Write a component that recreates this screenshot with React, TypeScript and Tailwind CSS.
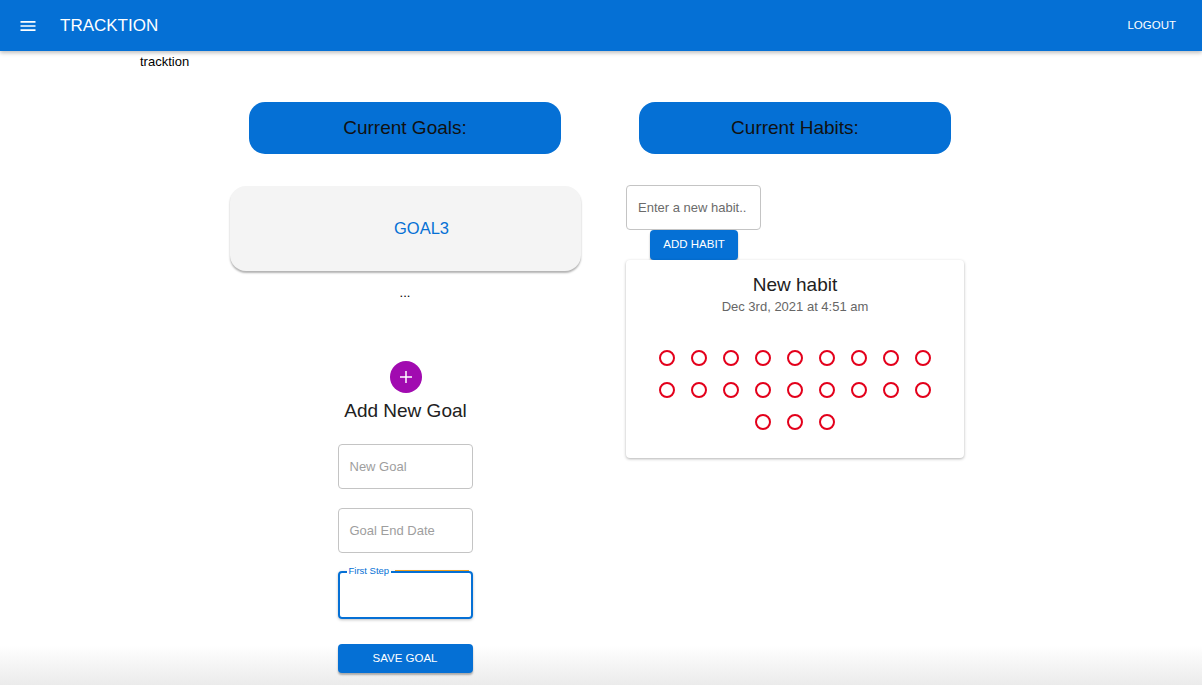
import React from "react";

const BLUE = "bg-[#0570d5]";

function MenuIcon() {
  return (
    <svg width="20" height="20" viewBox="0 0 24 24" fill="white">
      <path d="M3 18h18v-2H3v2zm0-5h18v-2H3v2zm0-7v2h18V6H3z" />
    </svg>
  );
}

function OutlinedInput({ placeholder }: { placeholder: string }) {
  return (
    <div className="w-[135px] h-[45px] border border-[#c4c4c4] rounded-[4px] flex items-center px-[11px] text-[13px] text-[#9e9e9e]">
      {placeholder}
    </div>
  );
}

function FocusedField({ label }: { label: string }) {
  return (
    <div className="relative w-[135px] h-[48px] border-2 border-[#0570d5] rounded-[4px] shadow-[0_1px_3px_rgba(0,0,0,0.25)]">
      <div className="absolute -top-[3px] left-[55px] right-[2px] h-[1px] bg-[#f0a020]" />
      <span className="absolute -top-[8px] left-[7px] bg-white px-[2px] text-[9.5px] leading-[12px] text-[#0570d5]">
        {label}
      </span>
    </div>
  );
}

export default function App() {
  const circles = Array.from({ length: 21 });

  return (
    <div className="relative min-h-[685px] bg-white font-['Liberation_Sans',Arial,sans-serif] text-[#212121] overflow-hidden">
      <div className="pointer-events-none absolute bottom-0 left-0 right-0 h-[40px] bg-gradient-to-t from-[#ebebeb] to-white" />

      <header className={`relative z-20 h-[51px] ${BLUE} flex items-center shadow-[0_2px_4px_rgba(0,0,0,0.25)]`}>
        <div className="ml-[18px] w-[20px] h-[20px] flex items-center">
          <MenuIcon />
        </div>
        <div className="ml-[22px] text-[17px] text-white">TRACKTION</div>
        <div className="ml-auto mr-[26px] text-[11.5px] text-white">LOGOUT</div>
      </header>

      <div className="relative z-10">
        <div className="pl-[140px] pt-[3px] text-[13px] leading-[16px] text-black">tracktion</div>

        <div className="flex ml-[210px] mt-[32px]">
          {/* goals column */}
          <div className="w-[390px] flex flex-col items-center">
            <div className={`w-[312px] h-[52px] ${BLUE} rounded-[16px] flex items-center justify-center text-[19px] text-[#111]`}>
              Current Goals:
            </div>

            <div className="mt-[32px] w-[351px] h-[85px] bg-[#f4f4f4] rounded-[16px] shadow-[0_2px_2px_rgba(0,0,0,0.3)] flex items-center justify-center">
              <span className="pl-[33px] text-[16.5px] text-[#0570d5]">GOAL3</span>
            </div>

            <div className="mt-[14px] text-[13px] leading-[16px] text-black">...</div>

            <button className="mt-[60px] ml-[1px] w-[32px] h-[32px] rounded-full bg-[#a10bb0] flex items-center justify-center">
              <svg width="14" height="14" viewBox="0 0 14 14" stroke="white" strokeWidth="1.5">
                <path d="M7 1v12M1 7h12" />
              </svg>
            </button>

            <div className="mt-[6px] ml-[1px] text-[19px] leading-[24px]">Add New Goal</div>

            <div className="mt-[21px]">
              <OutlinedInput placeholder="New Goal" />
            </div>
            <div className="mt-[19px]">
              <OutlinedInput placeholder="Goal End Date" />
            </div>
            <div className="mt-[18px]">
              <FocusedField label="First Step" />
            </div>

            <button className={`mt-[25px] w-[135px] h-[29px] ${BLUE} rounded-[4px] text-white text-[11.5px] shadow-[0_2px_2px_rgba(0,0,0,0.3)]`}>
              SAVE GOAL
            </button>
          </div>

          {/* habits column */}
          <div className="w-[390px] flex flex-col">
            <div className={`ml-[39px] w-[312px] h-[52px] ${BLUE} rounded-[16px] flex items-center justify-center text-[19px] text-[#111]`}>
              Current Habits:
            </div>

            <div className="mt-[31px] ml-[26px] w-[135px] h-[45px] border border-[#c4c4c4] rounded-[4px] flex items-center px-[11px] text-[13px] text-[#6b6b6b] whitespace-nowrap">
              Enter a new habit..
            </div>

            <button className={`ml-[50px] w-[88px] h-[30px] ${BLUE} rounded-[4px] text-white text-[11.5px] shadow-[0_2px_2px_rgba(0,0,0,0.3)]`}>
              ADD HABIT
            </button>

            <div className="ml-[26px] w-[338px] h-[198px] bg-white rounded-[4px] shadow-[0_1px_3px_rgba(0,0,0,0.3)] flex flex-col items-center">
              <div className="pt-[14px] text-[19px] leading-[22px]">New habit</div>
              <div className="mt-[3px] text-[13px] leading-[16px] text-[#666]">Dec 3rd, 2021 at 4:51 am</div>
              <div className="mt-[35px] w-[288px] flex flex-wrap justify-center gap-[16px]">
                {circles.map((_, i) => (
                  <div key={i} className="w-[16px] h-[16px] rounded-full border-2 border-[#e3001b]" />
                ))}
              </div>
            </div>
          </div>
        </div>
      </div>
    </div>
  );
}
